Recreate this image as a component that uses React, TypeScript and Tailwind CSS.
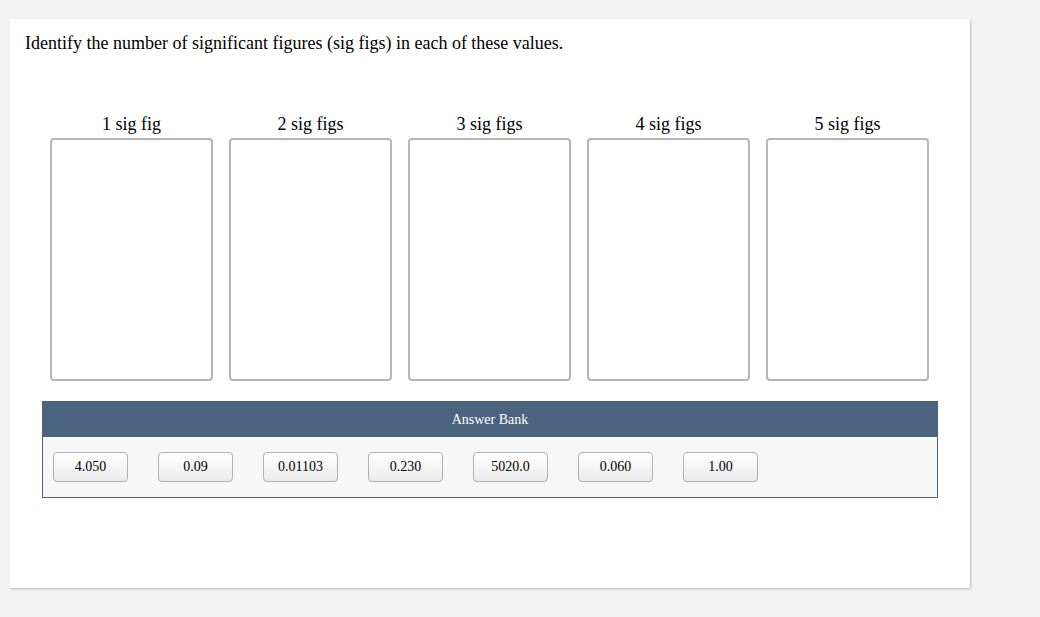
import React from "react";

const cols = ["1 sig fig", "2 sig figs", "3 sig figs", "4 sig figs", "5 sig figs"];
const answers = ["4.050", "0.09", "0.01103", "0.230", "5020.0", "0.060", "1.00"];

export default function App() {
  return (
    <div
      className="w-[1040px] h-[617px] bg-[#f2f2f2] pt-[19px] pl-[10px] overflow-hidden"
      style={{ fontFamily: '"Liberation Serif", "Times New Roman", serif' }}
    >
      <div className="w-[960px] h-[569px] bg-white shadow-[1px_1px_2px_rgba(0,0,0,0.25)] pt-[11px] px-[15px]">
        <p className="text-[18px] leading-[26px] text-black">
          Identify the number of significant figures (sig figs) in each of these values.
        </p>
        <div className="mt-[58px] ml-[25px] w-[879px] flex justify-between">
          {cols.map((c) => (
            <div key={c} className="w-[163px] flex flex-col items-center">
              <div className="text-[18px] leading-[20px] text-black h-[20px]">{c}</div>
              <div className="mt-[4px] w-[163px] h-[243px] border-2 border-[#b5b5b5] rounded-[4px] bg-white" />
            </div>
          ))}
        </div>
        <div className="mt-[20px] ml-[17px] w-[896px] border border-[#4b6179]">
          <div className="h-[35px] bg-[#4d6480] flex items-center justify-center text-white text-[14px] leading-[16px]">
            Answer Bank
          </div>
          <div className="bg-[#f7f7f7] h-[60px] pl-[10px] pt-[15px] flex gap-[30px]">
            {answers.map((a) => (
              <div
                key={a}
                className="w-[75px] h-[30px] rounded-[4px] border border-[#b0b0b0] bg-gradient-to-b from-white to-[#ebebeb] flex items-center justify-center text-[14px] leading-[16px] text-black"
              >
                {a}
              </div>
            ))}
          </div>
        </div>
      </div>
    </div>
  );
}
